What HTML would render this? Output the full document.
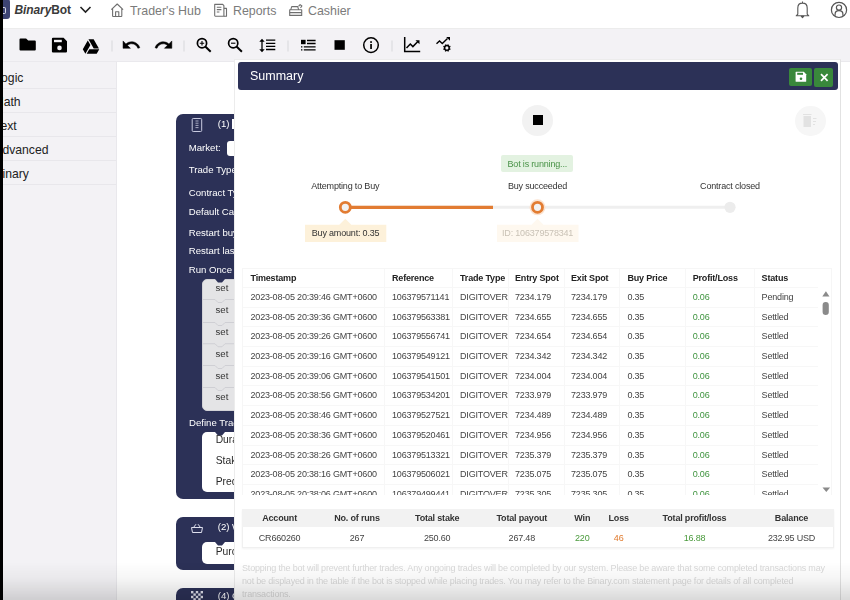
<!DOCTYPE html>
<html><head><meta charset="utf-8">
<style>
*{margin:0;padding:0;box-sizing:border-box}
html,body{width:850px;height:600px;overflow:hidden;background:#fff;font-family:"Liberation Sans",sans-serif;position:relative}
.a{position:absolute}
.hdr{left:0;top:0;width:850px;height:29px;background:#fff;border-bottom:1px solid #ececec}
.hl{color:#7b7b7b;font-size:12.4px;top:4px;white-space:nowrap}
.tb{left:0;top:29px;width:850px;height:33px;background:#f3f2f5;border-bottom:1px solid #eae9ed}
.sep{width:1px;height:11px;top:41px;background:#d6d6d6}
.side{left:0;top:62px;width:117px;height:538px;background:#f3f2f5;border-right:1px solid #e9e8ec}
.si{left:0;width:116px;height:24px;border-bottom:1px solid #e8e7eb;font-size:12.2px;color:#222;line-height:26px;white-space:nowrap}
.blk{background:#2c3157;border-radius:7px}
.bt{color:#fff;font-size:9.6px;white-space:nowrap}
.setb{background:#e6e6e8;border:1px solid #d6d6d8}
.panel{left:234px;top:59px;width:607px;height:560px;background:#fff;border:1px solid #ececec;border-right:1px solid #e2e2e2}
.s{font-size:9px;letter-spacing:-0.18px;white-space:nowrap;color:#333}
.sb{font-weight:bold;color:#222}
</style></head><body><div id="w" style="position:absolute;left:0;top:0;width:850px;height:600px;overflow:hidden;filter:blur(0.4px)">
<!-- header -->
<div class="a hdr"></div>
<div class="a" style="left:2px;top:-1px;width:8px;height:20px;background:#3d4474;border-radius:0 3px 3px 0"></div><div class="a" style="left:3px;top:7px;width:3px;height:7px;border:1.3px solid #d8dae8;border-left:none;border-radius:0 2px 2px 0"></div>
<div class="a" style="left:14.5px;top:3px;font-size:12px;font-weight:bold;color:#3a3a3a;white-space:nowrap;letter-spacing:-0.1px"><i>Binary</i>Bot</div>
<svg class="a" style="left:79px;top:5px" width="13" height="9" viewBox="0 0 13 9"><path d="M1.5 2 L6.5 7 L11.5 2" fill="none" stroke="#222" stroke-width="1.6"/></svg>

<svg class="a" style="left:0;top:0" width="850" height="28" viewBox="0 0 850 28">
<g fill="none" stroke="#6f6f6f" stroke-width="1.1" stroke-linejoin="round">
<!-- home -->
<path d="M111.3 9.6L117.2 4l5.9 5.6M112.6 8.6v7.3q0 .6.6.6h8q.6 0 .6-.6V8.6"/>
<path d="M115.6 16.4v-4.6h3.2v4.6"/>
<!-- reports -->
<path d="M214.7 4.4h8l1.2 1.3v10.5h-8.6q-.6 0-.6-.6z"/>
<path d="M223.9 8.4h2.6v7.8h-2.6"/>
<path d="M216.8 7.2h4.6M216.8 9.6h4.6M216.8 12h2.6"/>
<!-- cashier -->
<path d="M289.7 9.8h12v5.6h-12z"/>
<path d="M290.7 9.8l1-3.2h6l1 3.2M289.7 12.6h12"/>
<path d="M298.5 6.4l1.6-1.8 1.8 1.4-1.4 1.8"/>
<!-- bell -->
<path d="M802.5 1.6v1.2M797.8 14.2v-6.2q0-4.9 4.7-4.9t4.7 4.9v6.2l1.6 1.6h-12.6z" stroke="#555"/>
<path d="M801.3 16.4h2.4l-1.2 1.2z" fill="#555" stroke="#555"/>
<!-- account -->
<circle cx="839" cy="9.9" r="7.6" stroke="#555" stroke-width="1.2"/>
<circle cx="839" cy="7.6" r="2.6" stroke="#555" stroke-width="1.2"/>
<path d="M835.1 15.8v-1.6q0-3.5 3.9-3.5t3.9 3.5v1.6" stroke="#555" stroke-width="1.2"/>
</g>
</svg>
<div class="a hl" style="left:130px">Trader's Hub</div>
<div class="a hl" style="left:233px">Reports</div>
<div class="a hl" style="left:308px">Cashier</div>

<!-- toolbar -->
<div class="a tb"></div>
<svg class="a" style="left:0;top:0" width="460" height="60" viewBox="0 0 460 60">
<!-- folder -->
<path d="M20.5 38.5h5.6l2.1 2.1h6.6q1 0 1 1v8q0 1-1 1h-14.3q-1 0-1-1v-10.1q0-1 1-1z" fill="#000"/>
<!-- save -->
<path d="M53 37.8h10.6l3.4 3.4v10.3q0 1.1-1.1 1.1h-12.9q-1.1 0-1.1-1.1v-12.6q0-1.1 1.1-1.1z" fill="#000"/>
<rect x="54" y="39.8" width="7.8" height="2.4" fill="#f3f2f5"/>
<circle cx="59.5" cy="47.9" r="2.3" fill="#f3f2f5"/>
<!-- drive -->
<g transform="translate(82.8,38.3) scale(0.0322)"><path d="M339 314.9L175.4 32h161.2l163.6 282.9H339zm-137.5 23.6L120.9 480h310.5L512 338.5H201.5zM154.1 67.4L0 338.5 80.6 480 237 208.8 154.1 67.4z" fill="#000"/></g>
<rect x="111.5" y="40.5" width="1" height="11" fill="#d8d8dc"/>
<!-- undo -->
<g transform="translate(121.4,35.2) scale(0.82)"><path d="M12.5 8c-2.65 0-5.05.99-6.9 2.6L2 7v9h9l-3.62-3.62c1.39-1.16 3.16-1.88 5.12-1.88 3.54 0 6.55 2.31 7.6 5.5l2.37-.78C21.08 11.03 17.15 8 12.5 8z" fill="#000" stroke="#000" stroke-width="0.6"/></g>
<!-- redo -->
<g transform="translate(153.8,35.2) scale(0.82)"><path d="M18.4 10.6C16.55 8.99 14.15 8 11.5 8c-4.65 0-8.58 3.03-9.96 7.22L3.9 16c1.05-3.19 4.05-5.5 7.6-5.5 1.95 0 3.73.72 5.12 1.88L13 16h9V7l-3.6 3.6z" fill="#000" stroke="#000" stroke-width="0.6"/></g>
<rect x="183.5" y="40.5" width="1" height="11" fill="#d8d8dc"/>
<!-- zoom in -->
<circle cx="202" cy="43.2" r="4.6" fill="none" stroke="#000" stroke-width="1.7"/>
<path d="M205.3 46.5l5.4 5.2" stroke="#000" stroke-width="2"/>
<path d="M199.8 43.2h4.4M202 41v4.4" stroke="#000" stroke-width="1.1"/>
<!-- zoom out -->
<circle cx="233.2" cy="43.2" r="4.6" fill="none" stroke="#000" stroke-width="1.7"/>
<path d="M236.5 46.5l5.4 5.2" stroke="#000" stroke-width="2"/>
<path d="M231 43.2h4.4" stroke="#000" stroke-width="1.1"/>
<!-- line spacing -->
<path d="M262 40.5v9.8" stroke="#000" stroke-width="1.3"/>
<path d="M259.3 41.8l2.7-3 2.7 3zM259.3 49.2l2.7 3 2.7-3z" fill="#000"/>
<path d="M266 40.2h9.3M266 43.3h9.3M266 46.4h9.3M266 49.5h9.3" stroke="#000" stroke-width="1.3"/>
<rect x="287.5" y="40.5" width="1" height="11" fill="#d8d8dc"/>
<!-- list -->
<rect x="301" y="39.8" width="4.6" height="4.4" fill="#000"/>
<path d="M307 40.5h8.6M307 43.5h8.6M301 46.8h1.4M303.8 46.8h11.8M301 49.9h1.4M303.8 49.9h11.8" stroke="#000" stroke-width="1.3"/>
<!-- stop -->
<rect x="334.5" y="40.2" width="10.3" height="9.6" fill="#000"/>
<!-- info -->
<circle cx="371" cy="45.1" r="7.3" fill="none" stroke="#000" stroke-width="1.5"/>
<rect x="370.2" y="44" width="1.7" height="5" fill="#000"/>
<rect x="370.2" y="41.2" width="1.7" height="1.7" fill="#000"/>
<rect x="391.5" y="40.5" width="1" height="11" fill="#d8d8dc"/>
<!-- chart -->
<path d="M404.7 37v14.6h15.5" fill="none" stroke="#000" stroke-width="1.5"/>
<path d="M406.5 48l3.8-4 2.6 2.6 5.2-5.4" fill="none" stroke="#000" stroke-width="1.5"/>
<path d="M415.5 40.3h4v4z" fill="#000"/>
<!-- chart gear -->
<path d="M436.5 43.8l3-2.8 2.8 2.6 5.2-5" fill="none" stroke="#000" stroke-width="1.4"/>
<path d="M446.2 37h3.8v3.8z" fill="#000"/>
<circle cx="446.9" cy="47.9" r="2.3" fill="none" stroke="#000" stroke-width="1.5"/>
<path d="M449.12 48.82L450.41 49.35M447.82 50.12L448.35 51.41M445.98 50.12L445.45 51.41M444.68 48.82L443.39 49.35M444.68 46.98L443.39 46.45M445.98 45.68L445.45 44.39M447.82 45.68L448.35 44.39M449.12 46.98L450.41 46.45" stroke="#000" stroke-width="1.3"/>
</svg>


<!-- sidebar -->
<div class="a side"></div>
<div class="a si" style="top:65px;text-indent:-5.7px">Logic</div>
<div class="a si" style="top:89px;text-indent:-6.5px">Math</div>
<div class="a si" style="top:113px;text-indent:-5.7px">Text</div>
<div class="a si" style="top:137px;text-indent:-5.7px">Advanced</div>
<div class="a si" style="top:161px;text-indent:-5.7px">Binary</div>


<!-- blockly -->
<div class="a blk" style="left:176px;top:114px;width:120px;height:385px"></div>
<div class="a blk" style="left:176px;top:517px;width:120px;height:53px"></div>
<div class="a blk" style="left:176px;top:588px;width:120px;height:40px"></div>
<svg class="a" style="left:0;top:0" width="240" height="600" viewBox="0 0 240 600">
<g fill="none" stroke="#c9cbe0" stroke-width="1">
<rect x="192.2" y="118.5" width="9.5" height="13" rx="1"/>
<path d="M195.5 121h3M195.5 123.2h3M195.5 125.4h3M195.5 127.6h3" stroke-width="0.8"/>
<path d="M191.5 527.5h11l-1 5h-9z M193.5 527.5l2.5-3.3M200.5 527.5l-2.5-3.3" stroke="#dfe0ee"/>
</g>
<g fill="#e0e1ec">
<rect x="191" y="591" width="2.4" height="2.4"/><rect x="195.8" y="591" width="2.4" height="2.4"/><rect x="200.6" y="591" width="2.4" height="2.4"/>
<rect x="193.4" y="593.4" width="2.4" height="2.4"/><rect x="198.2" y="593.4" width="2.4" height="2.4"/>
<rect x="191" y="595.8" width="2.4" height="2.4"/><rect x="195.8" y="595.8" width="2.4" height="2.4"/><rect x="200.6" y="595.8" width="2.4" height="2.4"/>
<rect x="193.4" y="598.2" width="2.4" height="2.4"/><rect x="198.2" y="598.2" width="2.4" height="2.4"/>
</g>
</svg>
<div class="a" style="left:227px;top:141px;width:20px;height:14.5px;background:#fff;border-radius:3px"></div>
<div class="a" style="left:232px;top:119px;width:6px;height:10px;background:#fff"></div>
<!-- set stack -->
<div class="a" style="left:202px;top:279px;width:40px;height:132px;background:#e4e4e6;border-radius:5px 0 0 5px;border:1px solid #d2d2d6"></div>
<svg class="a" style="left:200px;top:275px" width="40" height="140" viewBox="0 0 40 140">
<path d="M15 4l3 3.5h4l3-3.5z" fill="#2c3157"/>
<g fill="none" stroke="#cfcfd4" stroke-width="1">
<path d="M3 24.5h12l3 3h4l3-3h15"/>
<path d="M3 47.5h12l3 3h4l3-3h15"/>
<path d="M3 68.75h12l3 3h4l3-3h15"/>
<path d="M3 90.5h12l3 3h4l3-3h15"/>
<path d="M3 112.5h12l3 3h4l3-3h15"/>
</g>
</svg>
<!-- define trade white block -->
<div class="a" style="left:202px;top:432px;width:40px;height:60px;background:#fff;border-radius:5px 0 0 5px"></div>
<svg class="a" style="left:200px;top:428px" width="40" height="10" viewBox="0 0 40 10"><path d="M15 4l3 3.5h4l3-3.5z" fill="#2c3157"/></svg>
<div class="a" style="left:202px;top:542px;width:40px;height:21.5px;background:#fff;border-radius:5px 0 0 5px"></div>
<svg class="a" style="left:200px;top:538px" width="40" height="10" viewBox="0 0 40 10"><path d="M15 4l3 3.5h4l3-3.5z" fill="#2c3157"/></svg>
<div class="a bt" style="left:217.7px;top:117.7px;line-height:12px;color:#fff;">(1)</div>
<div class="a bt" style="left:188.8px;top:141.7px;line-height:12px;color:#fff;">Market:</div>
<div class="a bt" style="left:188.8px;top:163.8px;line-height:12px;color:#fff;">Trade Type</div>
<div class="a bt" style="left:188.8px;top:186.6px;line-height:12px;color:#fff;">Contract Type</div>
<div class="a bt" style="left:188.8px;top:206px;line-height:12px;color:#fff;">Default Candle</div>
<div class="a bt" style="left:188.8px;top:227px;line-height:12px;color:#fff;">Restart buy</div>
<div class="a bt" style="left:188.8px;top:244.6px;line-height:12px;color:#fff;">Restart last</div>
<div class="a bt" style="left:188.8px;top:263.6px;line-height:12px;color:#fff;">Run Once</div>
<div class="a bt" style="left:215.5px;top:282px;line-height:12px;color:#333;">set</div>
<div class="a bt" style="left:215.5px;top:303.5px;line-height:12px;color:#333;">set</div>
<div class="a bt" style="left:215.5px;top:326px;line-height:12px;color:#333;">set</div>
<div class="a bt" style="left:215.5px;top:348px;line-height:12px;color:#333;">set</div>
<div class="a bt" style="left:215.5px;top:370px;line-height:12px;color:#333;">set</div>
<div class="a bt" style="left:215.5px;top:391px;line-height:12px;color:#333;">set</div>
<div class="a bt" style="left:189px;top:416.7px;line-height:12px;color:#fff;">Define Trade</div>
<div class="a bt" style="left:215.7px;top:434px;line-height:12px;color:#2a2a2a;font-size:10.3px;">Duration</div>
<div class="a bt" style="left:215.7px;top:454.7px;line-height:12px;color:#2a2a2a;font-size:10.3px;">Stake</div>
<div class="a bt" style="left:215.7px;top:475.7px;line-height:12px;color:#2a2a2a;font-size:10.3px;">Prediction</div>
<div class="a bt" style="left:217.7px;top:520.7px;line-height:12px;color:#fff;">(2) Watch</div>
<div class="a bt" style="left:215.7px;top:546px;line-height:12px;color:#2a2a2a;font-size:10.3px;">Purchase</div>
<div class="a bt" style="left:217.7px;top:590px;line-height:12px;color:#fff;">(4) C</div>
<!-- summary panel -->
<div class="a panel"></div>
<div class="a" style="left:238px;top:62px;width:599.7px;height:28px;background:#2c3157;border-radius:3px"></div>
<div class="a" style="left:250px;top:69px;color:#fff;font-size:12.5px;line-height:15px">Summary</div>
<div class="a" style="left:789px;top:68px;width:22.7px;height:18px;background:#39883b;border-radius:2px"></div>
<div class="a" style="left:814px;top:68px;width:19px;height:19px;background:#39883b;border-radius:2px"></div>
<svg class="a" style="left:780px;top:60px" width="60" height="30" viewBox="0 0 60 30">
<path d="M16.2 11.8h7.6l2.4 2.4v7q0 .6-.6.6h-9.4q-.6 0-.6-.6v-8.8q0-.6.6-.6z" fill="#fff"/>
<rect x="17.2" y="12.8" width="5.8" height="2" fill="#39883b"/>
<circle cx="21" cy="18.8" r="1.3" fill="#39883b"/>
<path d="M41 14.2l6.6 6.6M47.6 14.2l-6.6 6.6" stroke="#fff" stroke-width="1.7"/>
</svg>
<div class="a" style="left:522.3px;top:105px;width:31px;height:31px;border-radius:50%;background:#f2f2f2"></div>
<div class="a" style="left:533px;top:115.3px;width:10px;height:10px;background:#000"></div>
<div class="a" style="left:794.9px;top:105.5px;width:30.7px;height:30.7px;border-radius:50%;background:#f6f6f6"></div>
<svg class="a" style="left:795px;top:106px" width="31" height="31" viewBox="0 0 31 31">
<rect x="8.5" y="10" width="7.5" height="11" fill="#e2e2e2"/>
<path d="M8 8.5h8.5" stroke="#e2e2e2" stroke-width="1"/>
<path d="M18 12.5h3.5M18 15.5h3M18 18.5h2" stroke="#e2e2e2" stroke-width="1"/>
</svg>
<div class="a" style="left:501.3px;top:155.3px;width:72px;height:17.2px;background:#e3f2e1;border-radius:2px"></div>
<div class="a s" style="left:487.3px;top:158.0px;width:100px;text-align:center;line-height:12px;color:#4a9348">Bot is running...</div>
<div class="a s" style="left:265.3px;top:180.0px;width:160px;text-align:center;line-height:12px;color:#333">Attempting to Buy</div>
<div class="a s" style="left:457.5px;top:180.0px;width:160px;text-align:center;line-height:12px;color:#333">Buy succeeded</div>
<div class="a s" style="left:650.0px;top:180.0px;width:160px;text-align:center;line-height:12px;color:#333">Contract closed</div>
<svg class="a" style="left:330px;top:195px" width="420" height="30" viewBox="330 195 420 30">
<path d="M345 207.3H730" stroke="#efefef" stroke-width="3"/>
<path d="M345 207.3H493" stroke="#e27c32" stroke-width="3.2"/>
<circle cx="345.3" cy="207.3" r="5" fill="#f2f2f2" stroke="#e27c32" stroke-width="2.8"/>
<circle cx="537.5" cy="207.3" r="8" fill="#fbe3d0"/>
<circle cx="537.5" cy="207.3" r="5" fill="#f2f2f2" stroke="#e27c32" stroke-width="2.8"/>
<circle cx="730" cy="207.3" r="5.6" fill="#ececec"/>
</svg>
<svg class="a" style="left:300px;top:214px" width="300" height="32" viewBox="300 214 300 32">
<path d="M305 224.7h34.3l6-6 6 6h35v17.3h-81.3z" fill="#fdf1da"/>
<path d="M497 224.7h34.5l6-6 6 6h35v17.3h-81.5z" fill="#fef8ef"/>
</svg>
<div class="a s" style="left:295.6px;top:227.3px;width:100px;text-align:center;line-height:12px;color:#333">Buy amount: 0.35</div>
<div class="a s" style="left:487.6px;top:227.3px;width:100px;text-align:center;line-height:12px;color:#c9c2b6">ID: 106379578341</div>
<div class="a" style="left:242px;top:268.2px;width:590px;height:230px;border:1px solid #f6f6f6;border-bottom:none;overflow:hidden">
<div class="a" style="left:0;top:17.8px;width:575px;height:1px;background:#f7f7f7"></div>
<div class="a" style="left:0;top:37.5px;width:575px;height:1px;background:#f7f7f7"></div>
<div class="a" style="left:0;top:57.2px;width:575px;height:1px;background:#f7f7f7"></div>
<div class="a" style="left:0;top:76.9px;width:575px;height:1px;background:#f7f7f7"></div>
<div class="a" style="left:0;top:96.6px;width:575px;height:1px;background:#f7f7f7"></div>
<div class="a" style="left:0;top:116.3px;width:575px;height:1px;background:#f7f7f7"></div>
<div class="a" style="left:0;top:136.0px;width:575px;height:1px;background:#f7f7f7"></div>
<div class="a" style="left:0;top:155.7px;width:575px;height:1px;background:#f7f7f7"></div>
<div class="a" style="left:0;top:175.4px;width:575px;height:1px;background:#f7f7f7"></div>
<div class="a" style="left:0;top:195.1px;width:575px;height:1px;background:#f7f7f7"></div>
<div class="a" style="left:0;top:214.8px;width:575px;height:1px;background:#f7f7f7"></div>
<div class="a" style="left:0;top:234.5px;width:575px;height:1px;background:#f7f7f7"></div>
<div class="a" style="left:140.5px;top:0;width:1px;height:240px;background:#f7f7f7"></div>
<div class="a" style="left:208.7px;top:0;width:1px;height:240px;background:#f7f7f7"></div>
<div class="a" style="left:265.3px;top:0;width:1px;height:240px;background:#f7f7f7"></div>
<div class="a" style="left:320.8px;top:0;width:1px;height:240px;background:#f7f7f7"></div>
<div class="a" style="left:376.2px;top:0;width:1px;height:240px;background:#f7f7f7"></div>
<div class="a" style="left:441.8px;top:0;width:1px;height:240px;background:#f7f7f7"></div>
<div class="a" style="left:511.0px;top:0;width:1px;height:240px;background:#f7f7f7"></div>
<div class="a s sb" style="left:7.5px;top:2.4px;line-height:12px;">Timestamp</div>
<div class="a s sb" style="left:149px;top:2.4px;line-height:12px;">Reference</div>
<div class="a s sb" style="left:217px;top:2.4px;line-height:12px;">Trade Type</div>
<div class="a s sb" style="left:272px;top:2.4px;line-height:12px;">Entry Spot</div>
<div class="a s sb" style="left:328px;top:2.4px;line-height:12px;">Exit Spot</div>
<div class="a s sb" style="left:384.4px;top:2.4px;line-height:12px;">Buy Price</div>
<div class="a s sb" style="left:449.70000000000005px;top:2.4px;line-height:12px;">Profit/Loss</div>
<div class="a s sb" style="left:518.6px;top:2.4px;line-height:12px;">Status</div>
<div class="a s" style="left:7.5px;top:21.8px;line-height:12px;color:#444">2023-08-05 20:39:46 GMT+0600</div>
<div class="a s" style="left:149px;top:21.8px;line-height:12px;color:#444">106379571141</div>
<div class="a s" style="left:217px;top:21.8px;line-height:12px;color:#444">DIGITOVER</div>
<div class="a s" style="left:272px;top:21.8px;line-height:12px;color:#444">7234.179</div>
<div class="a s" style="left:328px;top:21.8px;line-height:12px;color:#444">7234.179</div>
<div class="a s" style="left:384.4px;top:21.8px;line-height:12px;color:#444">0.35</div>
<div class="a s" style="left:449.70000000000005px;top:21.8px;line-height:12px;color:#409440">0.06</div>
<div class="a s" style="left:518.6px;top:21.8px;line-height:12px;color:#444">Pending</div>
<div class="a s" style="left:7.5px;top:41.5px;line-height:12px;color:#444">2023-08-05 20:39:36 GMT+0600</div>
<div class="a s" style="left:149px;top:41.5px;line-height:12px;color:#444">106379563381</div>
<div class="a s" style="left:217px;top:41.5px;line-height:12px;color:#444">DIGITOVER</div>
<div class="a s" style="left:272px;top:41.5px;line-height:12px;color:#444">7234.655</div>
<div class="a s" style="left:328px;top:41.5px;line-height:12px;color:#444">7234.655</div>
<div class="a s" style="left:384.4px;top:41.5px;line-height:12px;color:#444">0.35</div>
<div class="a s" style="left:449.70000000000005px;top:41.5px;line-height:12px;color:#409440">0.06</div>
<div class="a s" style="left:518.6px;top:41.5px;line-height:12px;color:#444">Settled</div>
<div class="a s" style="left:7.5px;top:61.2px;line-height:12px;color:#444">2023-08-05 20:39:26 GMT+0600</div>
<div class="a s" style="left:149px;top:61.2px;line-height:12px;color:#444">106379556741</div>
<div class="a s" style="left:217px;top:61.2px;line-height:12px;color:#444">DIGITOVER</div>
<div class="a s" style="left:272px;top:61.2px;line-height:12px;color:#444">7234.654</div>
<div class="a s" style="left:328px;top:61.2px;line-height:12px;color:#444">7234.654</div>
<div class="a s" style="left:384.4px;top:61.2px;line-height:12px;color:#444">0.35</div>
<div class="a s" style="left:449.70000000000005px;top:61.2px;line-height:12px;color:#409440">0.06</div>
<div class="a s" style="left:518.6px;top:61.2px;line-height:12px;color:#444">Settled</div>
<div class="a s" style="left:7.5px;top:80.9px;line-height:12px;color:#444">2023-08-05 20:39:16 GMT+0600</div>
<div class="a s" style="left:149px;top:80.9px;line-height:12px;color:#444">106379549121</div>
<div class="a s" style="left:217px;top:80.9px;line-height:12px;color:#444">DIGITOVER</div>
<div class="a s" style="left:272px;top:80.9px;line-height:12px;color:#444">7234.342</div>
<div class="a s" style="left:328px;top:80.9px;line-height:12px;color:#444">7234.342</div>
<div class="a s" style="left:384.4px;top:80.9px;line-height:12px;color:#444">0.35</div>
<div class="a s" style="left:449.70000000000005px;top:80.9px;line-height:12px;color:#409440">0.06</div>
<div class="a s" style="left:518.6px;top:80.9px;line-height:12px;color:#444">Settled</div>
<div class="a s" style="left:7.5px;top:100.6px;line-height:12px;color:#444">2023-08-05 20:39:06 GMT+0600</div>
<div class="a s" style="left:149px;top:100.6px;line-height:12px;color:#444">106379541501</div>
<div class="a s" style="left:217px;top:100.6px;line-height:12px;color:#444">DIGITOVER</div>
<div class="a s" style="left:272px;top:100.6px;line-height:12px;color:#444">7234.004</div>
<div class="a s" style="left:328px;top:100.6px;line-height:12px;color:#444">7234.004</div>
<div class="a s" style="left:384.4px;top:100.6px;line-height:12px;color:#444">0.35</div>
<div class="a s" style="left:449.70000000000005px;top:100.6px;line-height:12px;color:#409440">0.06</div>
<div class="a s" style="left:518.6px;top:100.6px;line-height:12px;color:#444">Settled</div>
<div class="a s" style="left:7.5px;top:120.3px;line-height:12px;color:#444">2023-08-05 20:38:56 GMT+0600</div>
<div class="a s" style="left:149px;top:120.3px;line-height:12px;color:#444">106379534201</div>
<div class="a s" style="left:217px;top:120.3px;line-height:12px;color:#444">DIGITOVER</div>
<div class="a s" style="left:272px;top:120.3px;line-height:12px;color:#444">7233.979</div>
<div class="a s" style="left:328px;top:120.3px;line-height:12px;color:#444">7233.979</div>
<div class="a s" style="left:384.4px;top:120.3px;line-height:12px;color:#444">0.35</div>
<div class="a s" style="left:449.70000000000005px;top:120.3px;line-height:12px;color:#409440">0.06</div>
<div class="a s" style="left:518.6px;top:120.3px;line-height:12px;color:#444">Settled</div>
<div class="a s" style="left:7.5px;top:140.0px;line-height:12px;color:#444">2023-08-05 20:38:46 GMT+0600</div>
<div class="a s" style="left:149px;top:140.0px;line-height:12px;color:#444">106379527521</div>
<div class="a s" style="left:217px;top:140.0px;line-height:12px;color:#444">DIGITOVER</div>
<div class="a s" style="left:272px;top:140.0px;line-height:12px;color:#444">7234.489</div>
<div class="a s" style="left:328px;top:140.0px;line-height:12px;color:#444">7234.489</div>
<div class="a s" style="left:384.4px;top:140.0px;line-height:12px;color:#444">0.35</div>
<div class="a s" style="left:449.70000000000005px;top:140.0px;line-height:12px;color:#409440">0.06</div>
<div class="a s" style="left:518.6px;top:140.0px;line-height:12px;color:#444">Settled</div>
<div class="a s" style="left:7.5px;top:159.7px;line-height:12px;color:#444">2023-08-05 20:38:36 GMT+0600</div>
<div class="a s" style="left:149px;top:159.7px;line-height:12px;color:#444">106379520461</div>
<div class="a s" style="left:217px;top:159.7px;line-height:12px;color:#444">DIGITOVER</div>
<div class="a s" style="left:272px;top:159.7px;line-height:12px;color:#444">7234.956</div>
<div class="a s" style="left:328px;top:159.7px;line-height:12px;color:#444">7234.956</div>
<div class="a s" style="left:384.4px;top:159.7px;line-height:12px;color:#444">0.35</div>
<div class="a s" style="left:449.70000000000005px;top:159.7px;line-height:12px;color:#409440">0.06</div>
<div class="a s" style="left:518.6px;top:159.7px;line-height:12px;color:#444">Settled</div>
<div class="a s" style="left:7.5px;top:179.4px;line-height:12px;color:#444">2023-08-05 20:38:26 GMT+0600</div>
<div class="a s" style="left:149px;top:179.4px;line-height:12px;color:#444">106379513321</div>
<div class="a s" style="left:217px;top:179.4px;line-height:12px;color:#444">DIGITOVER</div>
<div class="a s" style="left:272px;top:179.4px;line-height:12px;color:#444">7235.379</div>
<div class="a s" style="left:328px;top:179.4px;line-height:12px;color:#444">7235.379</div>
<div class="a s" style="left:384.4px;top:179.4px;line-height:12px;color:#444">0.35</div>
<div class="a s" style="left:449.70000000000005px;top:179.4px;line-height:12px;color:#409440">0.06</div>
<div class="a s" style="left:518.6px;top:179.4px;line-height:12px;color:#444">Settled</div>
<div class="a s" style="left:7.5px;top:199.1px;line-height:12px;color:#444">2023-08-05 20:38:16 GMT+0600</div>
<div class="a s" style="left:149px;top:199.1px;line-height:12px;color:#444">106379506021</div>
<div class="a s" style="left:217px;top:199.1px;line-height:12px;color:#444">DIGITOVER</div>
<div class="a s" style="left:272px;top:199.1px;line-height:12px;color:#444">7235.075</div>
<div class="a s" style="left:328px;top:199.1px;line-height:12px;color:#444">7235.075</div>
<div class="a s" style="left:384.4px;top:199.1px;line-height:12px;color:#444">0.35</div>
<div class="a s" style="left:449.70000000000005px;top:199.1px;line-height:12px;color:#409440">0.06</div>
<div class="a s" style="left:518.6px;top:199.1px;line-height:12px;color:#444">Settled</div>
<div class="a s" style="left:7.5px;top:218.8px;line-height:12px;color:#444">2023-08-05 20:38:06 GMT+0600</div>
<div class="a s" style="left:149px;top:218.8px;line-height:12px;color:#444">106379499441</div>
<div class="a s" style="left:217px;top:218.8px;line-height:12px;color:#444">DIGITOVER</div>
<div class="a s" style="left:272px;top:218.8px;line-height:12px;color:#444">7235.305</div>
<div class="a s" style="left:328px;top:218.8px;line-height:12px;color:#444">7235.305</div>
<div class="a s" style="left:384.4px;top:218.8px;line-height:12px;color:#444">0.35</div>
<div class="a s" style="left:449.70000000000005px;top:218.8px;line-height:12px;color:#409440">0.06</div>
<div class="a s" style="left:518.6px;top:218.8px;line-height:12px;color:#444">Settled</div>
</div>
<div class="a" style="left:240px;top:495.3px;width:598px;height:13px;background:#fff"></div>
<svg class="a" style="left:815px;top:285px" width="20" height="215" viewBox="815 285 20 215">
<path d="M822.3 296.6l3.6-5.4 3.6 5.4z" fill="#8a8a8a"/>
<rect x="822.6" y="302" width="6.2" height="13" rx="3" fill="#8a8a8a"/>
<path d="M822.5 487.6l3.8 4.4 3.8-4.4z" fill="#8a8a8a"/>
</svg>
<div class="a" style="left:242px;top:509px;width:592px;height:39px;border:1px solid #f0f0f0;box-shadow:0 1px 2px rgba(0,0,0,.05)"></div>
<div class="a" style="left:242px;top:509px;width:592px;height:17.6px;background:#f2f2f2"></div>
<div class="a s sb" style="left:219.6px;top:512.0px;width:120px;text-align:center;line-height:12px;color:#333">Account</div>
<div class="a s" style="left:219.6px;top:531.5px;width:120px;text-align:center;line-height:12px;color:#444">CR660260</div>
<div class="a s sb" style="left:297.0px;top:512.0px;width:120px;text-align:center;line-height:12px;color:#333">No. of runs</div>
<div class="a s" style="left:297.0px;top:531.5px;width:120px;text-align:center;line-height:12px;color:#444">267</div>
<div class="a s sb" style="left:377.2px;top:512.0px;width:120px;text-align:center;line-height:12px;color:#333">Total stake</div>
<div class="a s" style="left:377.2px;top:531.5px;width:120px;text-align:center;line-height:12px;color:#444">250.60</div>
<div class="a s sb" style="left:461.8px;top:512.0px;width:120px;text-align:center;line-height:12px;color:#333">Total payout</div>
<div class="a s" style="left:461.8px;top:531.5px;width:120px;text-align:center;line-height:12px;color:#444">267.48</div>
<div class="a s sb" style="left:522.3px;top:512.0px;width:120px;text-align:center;line-height:12px;color:#333">Win</div>
<div class="a s" style="left:522.3px;top:531.5px;width:120px;text-align:center;line-height:12px;color:#4a9a3c">220</div>
<div class="a s sb" style="left:558.7px;top:512.0px;width:120px;text-align:center;line-height:12px;color:#333">Loss</div>
<div class="a s" style="left:558.7px;top:531.5px;width:120px;text-align:center;line-height:12px;color:#e07b2e">46</div>
<div class="a s sb" style="left:634.5px;top:512.0px;width:120px;text-align:center;line-height:12px;color:#333">Total profit/loss</div>
<div class="a s" style="left:634.5px;top:531.5px;width:120px;text-align:center;line-height:12px;color:#4a9a3c">16.88</div>
<div class="a s sb" style="left:731.5px;top:512.0px;width:120px;text-align:center;line-height:12px;color:#333">Balance</div>
<div class="a s" style="left:731.5px;top:531.5px;width:120px;text-align:center;line-height:12px;color:#444">232.95 USD</div>
<div class="a s" style="left:242px;top:562px;width:600px;line-height:12.8px;color:#d9d9d9;white-space:normal">Stopping the bot will prevent further trades. Any ongoing trades will be completed by our system. Please be aware that some completed transactions may<br>not be displayed in the table if the bot is stopped while placing trades. You may refer to the Binary.com statement page for details of all completed<br>transactions.</div>
<!-- bottom fade -->
<div class="a" style="left:0;top:562px;width:850px;height:38px;background:linear-gradient(to bottom,rgba(0,0,0,0) 0%,rgba(0,0,0,.04) 45%,rgba(0,0,0,.15) 100%)"></div>
<!-- black bar -->
<div class="a" style="left:0;top:0;width:3px;height:600px;background:#000"></div>
</div></body></html>
